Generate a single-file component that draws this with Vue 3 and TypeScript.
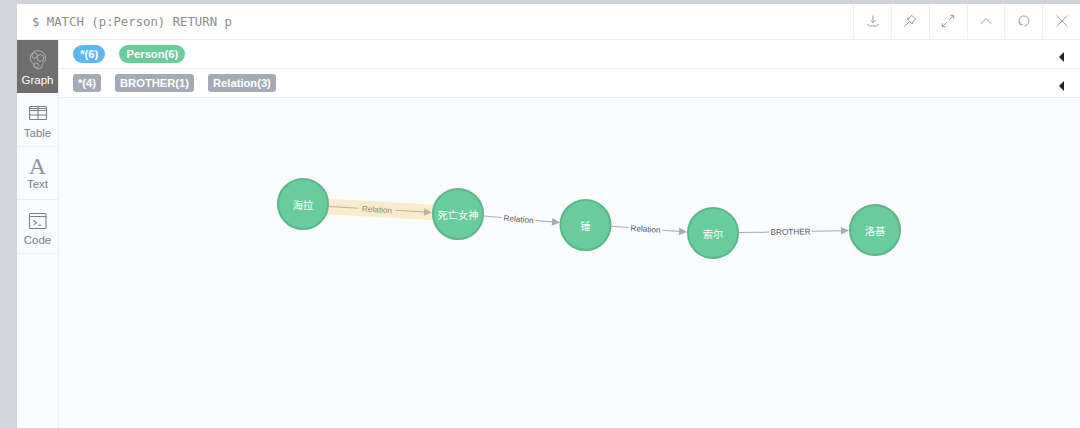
<script setup lang="ts">
interface GraphNode { name: string; x: number; y: number }
interface Edge { x1: number; y1: number; x2: number; y2: number; label: string; gap: number; highlight?: boolean }

const nodes: GraphNode[] = [
  { name: '海拉', x: 303, y: 204 },
  { name: '死亡女神', x: 458, y: 214 },
  { name: '锤', x: 585.5, y: 225 },
  { name: '索尔', x: 713, y: 233 },
  { name: '洛基', x: 875, y: 230 },
]

const edges: Edge[] = [
  { x1: 329, y1: 206.6, x2: 432, y2: 212.4, label: 'Relation', gap: 37, highlight: true },
  { x1: 484, y1: 216, x2: 560, y2: 222.6, label: 'Relation', gap: 34 },
  { x1: 611, y1: 226.2, x2: 687, y2: 232, label: 'Relation', gap: 34 },
  { x1: 739, y1: 232.6, x2: 849, y2: 230.6, label: 'BROTHER', gap: 42 },
]

const drawn = edges.map((e) => {
  const dx = e.x2 - e.x1
  const dy = e.y2 - e.y1
  const len = Math.hypot(dx, dy)
  const angle = (Math.atan2(dy, dx) * 180) / Math.PI
  const mid = (len - 7) / 2
  return { ...e, len, angle, mid, a: mid - e.gap / 2, b: mid + e.gap / 2 }
})

const nodeTabs = ['Table', 'Text', 'Code']
</script>

<template>
  <div class="page">
    <div class="frame">
      <header class="head">
        <div class="query">$ MATCH (p:Person) RETURN p</div>
        <div class="actions">
          <button class="act">
            <svg width="14" height="14" viewBox="0 0 14 14"><path d="M7 1.5v7M4.4 6 7 8.6 9.6 6M1.5 10c.6 1.6 2 2 3 2h5c1 0 2.4-.4 3-2" /></svg>
          </button>
          <button class="act">
            <svg width="14" height="14" viewBox="0 0 14 14"><path d="M8.6 1.2 12.8 5.4 11.6 6 9.7 8 9.4 10 4 4.6 6 4.3 8 2.4ZM6.2 7.8 1.4 12.6" /></svg>
          </button>
          <button class="act">
            <svg width="14" height="14" viewBox="0 0 14 14"><path d="M8.4 5.6 12.6 1.4M9.2 1.3h3.5v3.5M5.6 8.4 1.4 12.6M1.3 9.2v3.5h3.5" /></svg>
          </button>
          <button class="act">
            <svg width="14" height="14" viewBox="0 0 14 14"><path d="M1.4 10 7 4.6 12.6 10" /></svg>
          </button>
          <button class="act">
            <svg width="14" height="14" viewBox="0 0 14 14"><path d="M3.2 10.3A5 5 0 1 1 7.800 11.900M2.800 7.800 3 10.700 5.800 10.500" /></svg>
          </button>
          <button class="act">
            <svg width="14" height="14" viewBox="0 0 14 14"><path d="M1.5 1.500 12.500 12.500M12.500 1.500 1.500 12.500" /></svg>
          </button>
        </div>
      </header>

      <div class="body">
        <nav class="side">
          <div class="tab active">
            <svg class="ico" width="20" height="22" viewBox="0 0 20 22">
              <path d="M6 2.500C9 .8 14 2 16 4.500c2.400 3 2 7-.3 9-1.200 1.200-1.600 2.600-1.900 4-.5 2.200-3.500 3.200-5.400 2-1.700-1-1.700-2.800-2.800-4.300C3.700 13.200 2 11.500 2.300 9 2.600 6.500 3.500 4 6 2.500Z" />
              <circle cx="6.600" cy="6.600" r="2.700" />
              <circle cx="12.400" cy="9" r="3.400" />
              <circle cx="8.200" cy="16.400" r="2.500" />
            </svg>
            <span>Graph</span>
          </div>
          <div v-for="t in nodeTabs" :key="t" class="tab" :class="t.toLowerCase()">
            <svg v-if="t === 'Table'" class="ico" width="20" height="16" viewBox="0 0 20 16">
              <rect x="1.500" y="1.500" width="17" height="13" rx="1" />
              <path d="M1.500 5.500h17M1.500 10h17M10 1.500v13M1.500 3.500h17" />
            </svg>
            <span v-else-if="t === 'Text'" class="bigA">A</span>
            <svg v-else class="ico" width="20" height="18" viewBox="0 0 20 18">
              <rect x="1.500" y="1.500" width="16.500" height="15" rx="1" />
              <path d="M1.500 4.500h16.500M5.500 8.500l3 2.300-3 2.300M10 13.300h3.500" />
            </svg>
            <span>{{ t }}</span>
          </div>
        </nav>

        <main class="main">
          <div class="legend">
            <span class="pill blue">*(6)</span>
            <span class="pill green">Person(6)</span>
            <i class="caret"></i>
          </div>
          <div class="legend">
            <span class="pill gray tight">*(4)</span>
            <span class="pill gray">BROTHER(1)</span>
            <span class="pill gray">Relation(3)</span>
            <i class="caret"></i>
          </div>
          <div class="canvas">
            <svg class="graph" width="1021" height="330" viewBox="59 98 1021 330">
              <g v-for="e in drawn" :key="e.x1" :transform="`translate(${e.x1} ${e.y1}) rotate(${e.angle})`">
                <rect v-if="e.highlight" x="-2" y="-7.800" :width="e.len + 4" height="15.600" fill="#faebcc" />
                <line x1="0" y1="0" :x2="e.a" y2="0" class="rel" :class="{ hi: e.highlight }" />
                <line :x1="e.b" y1="0" :x2="e.len - 6" y2="0" class="rel" :class="{ hi: e.highlight }" />
                <path :d="`M${e.len} 0 L${e.len - 8} -3.800 L${e.len - 8} 3.800 Z`" :fill="e.highlight ? '#bcb39c' : '#a5abb6'" />
                <text :x="e.mid" y="3" class="lbl" :class="{ hi: e.highlight }">{{ e.label }}</text>
              </g>
              <g v-for="n in nodes" :key="n.name">
                <circle :cx="n.x" :cy="n.y" r="25" class="node" />
                <text :x="n.x" :y="n.y + 4.500" class="name">{{ n.name }}</text>
              </g>
            </svg>
          </div>
        </main>
      </div>
    </div>
  </div>
</template>

<style>
html, body { margin: 0; background: #d1d4d9; }
</style>

<style scoped>
.page {
  width: 1080px;
  height: 428px;
  padding: 4px 0 0 17px;
  box-sizing: border-box;
  background: #d1d4d9;
  overflow: hidden;
  font-family: "Liberation Sans", Arial, sans-serif;
}
.frame { height: 424px; background: #fff; display: flex; flex-direction: column; }
.head {
  height: 36px;
  box-sizing: border-box;
  border-bottom: 1px solid #eceef3;
  display: flex;
  align-items: center;
  justify-content: space-between;
}
.query {
  margin-left: 15px;
  font: 12.3px "DejaVu Sans Mono", monospace;
  color: #8b8b8b;
  padding-top: 1px;
}
.actions { display: flex; height: 35px; }
.act {
  width: 37.800px;
  padding: 0 0 2px;
  background: #fff;
  border: 0;
  border-left: 1px solid #eceef3;
  display: flex;
  align-items: center;
  justify-content: center;
  box-sizing: border-box;
}
.act svg { fill: none; stroke: #9b9b9b; stroke-width: 1; }
.body { flex: 1; display: flex; min-height: 0; }
.side {
  width: 42px;
  box-sizing: border-box;
  background: #f9fbfd;
  border-right: 1px solid #e9ecf1;
  flex: none;
}
.tab {
  height: 53.500px;
  box-sizing: border-box;
  border-bottom: 1px solid #eceef3;
  display: flex;
  flex-direction: column;
  align-items: center;
  justify-content: flex-end;
  padding-bottom: 7px;
  font-size: 11.500px;
  color: #7b8087;
  gap: 6px;
}
.tab.active {
  height: 53px;
  width: 41px;
  background: #6e6e6e;
  color: #fff;
  border-bottom: 0;
  padding-bottom: 7px;
  gap: 3px;
}
.tab.text { padding-bottom: 9px; gap: 2px; }
.tab.code { gap: 4px; }
.ico { fill: none; stroke: #7b8087; stroke-width: 1.100; }
.active .ico { stroke: #b4b4b4; stroke-width: 1; }
.bigA {
  font: 24px/20px "Liberation Serif", serif;
  color: #8f949b;
  font-weight: 400;
}
.main { flex: 1; display: flex; flex-direction: column; min-width: 0; }
.legend {
  height: 29px;
  box-sizing: border-box;
  border-bottom: 1px solid #e9ebf1;
  padding: 5px 0 0 14px;
  display: flex;
  align-items: flex-start;
  gap: 14px;
  position: relative;
}
.pill {
  height: 18px;
  line-height: 18px;
  padding: 0 5px;
  font-size: 11.200px;
  font-weight: 700;
  color: #fff;
  border-radius: 3px;
  box-sizing: border-box;
}
.tight { padding: 0 5px; }
.blue { background: #5db7f7; padding: 0 7.200px; border-radius: 9px; }
.green { background: #68cc9c; padding: 0 7.200px; border-radius: 9px; }
.gray { background: #a5abb6; }
.caret {
  position: absolute;
  right: 16px;
  top: 12px;
  width: 0;
  height: 0;
  border-style: solid;
  border-width: 5px 5px 5px 0;
  border-color: transparent #222 transparent transparent;
}
.canvas { flex: 1; background: #f9fbfd; min-height: 0; overflow: hidden; }
.graph { display: block; }
.rel { stroke: #a5abb6; stroke-width: 1; }
.rel.hi { stroke: #bcb39c; }
.lbl {
  font-family: "Liberation Sans", sans-serif;
  font-size: 8.200px;
  text-anchor: middle;
  fill: #555a63;
}
.lbl.hi { fill: #8d8672; }
.node { fill: #68cc9c; stroke: #5db58c; stroke-width: 2; }
.name {
  font-family: "Liberation Sans", "Noto Sans CJK SC", sans-serif;
  font-size: 10.300px;
  text-anchor: middle;
  fill: #fff;
}
</style>
